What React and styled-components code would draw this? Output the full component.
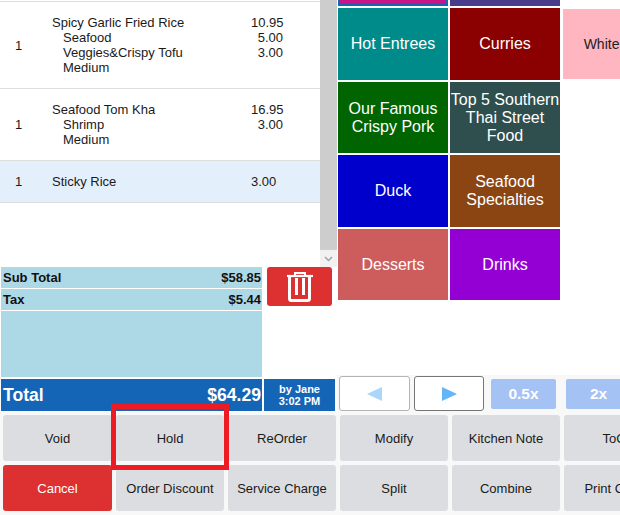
import React from 'react';
import styled, { createGlobalStyle } from 'styled-components';

const GlobalStyle = createGlobalStyle`
  html, body {
    margin: 0;
    padding: 0;
    background: #fff;
    font-family: "Liberation Sans", Arial, sans-serif;
  }
`;

// Layout
const Screen = styled.div`
  position: relative;
  width: 620px;
  height: 515px;
  overflow: hidden;
`;

const Top = styled.div`
  display: flex;
  height: 412px;
`;

const LeftColumn = styled.div`
  display: flex;
  flex-direction: column;
  width: 337px;
  flex: none;
`;

const RightColumn = styled.div`
  display: flex;
  flex-direction: column;
  width: 283px;
  flex: none;
`;

// Order list
const ScrollArea = styled.div`
  display: flex;
  height: 267px;
  flex: none;
`;

const OrderList = styled.div`
  width: 320px;
  flex: none;
  padding-top: 1px;
  box-sizing: border-box;
`;

const TopRule = styled.div`
  height: 1px;
  background: #ddd;
`;

const OrderRow = styled.div`
  display: grid;
  grid-template-columns: 52px 199px 32px;
  align-items: center;
  padding: 13px 0;
  border-bottom: 1px solid #ddd;
  background: ${(p) => (p.$selected ? '#e3f0fb' : '#fff')};
  font-size: 13px;
  line-height: 15px;
  color: #1a1a1a;
`;

const Qty = styled.div`
  padding-left: 15px;
`;

const ItemLine = styled.div`
  padding-left: ${(p) => (p.$modifier ? '11px' : '0')};
  white-space: nowrap;
`;

const PriceColumn = styled.div`
  text-align: ${(p) => (p.$left ? 'left' : 'right')};
  align-self: start;
`;

const Scrollbar = styled.div`
  display: flex;
  flex-direction: column;
  width: 17px;
  flex: none;
`;

const ScrollThumb = styled.div`
  height: 250px;
  background: #cdcdcd;
`;

const ScrollArrow = styled.div`
  display: flex;
  align-items: center;
  justify-content: center;
  height: 17px;
  background: #f1f1f1;
`;

// Totals
const SummaryRow = styled.div`
  display: flex;
  height: 110px;
  flex: none;
  padding-left: 1px;
`;

const Summary = styled.div`
  display: flex;
  flex-direction: column;
  gap: 1px;
  width: 261px;
  flex: none;
`;

const SummaryLine = styled.div`
  display: flex;
  justify-content: space-between;
  align-items: center;
  height: 21px;
  padding: 0 1px 0 2px;
  background: #add8e6;
  font-size: 13px;
  font-weight: bold;
  color: #111;
`;

const SummaryFill = styled.div`
  flex: 1;
  background: #add8e6;
`;

const TrashButton = styled.button`
  display: flex;
  align-items: flex-start;
  justify-content: flex-start;
  width: 65px;
  height: 39px;
  margin-left: 5px;
  padding: 4px 0 0 20px;
  border: 0;
  border-radius: 3px;
  background: #dd3030;
  box-sizing: border-box;
`;

const TotalRow = styled.div`
  display: flex;
  gap: 2px;
  height: 32px;
  margin-top: 2px;
  padding-left: 1px;
  color: #fff;
`;

const TotalBar = styled.div`
  display: flex;
  justify-content: space-between;
  align-items: center;
  width: 261px;
  padding: 0 1px 0 2px;
  box-sizing: border-box;
  background: #1565b7;
  font-size: 17.6px;
  font-weight: bold;
`;

const ByLine = styled.div`
  display: flex;
  flex-direction: column;
  align-items: center;
  justify-content: center;
  width: 71px;
  background: #1565b7;
  font-size: 11px;
  font-weight: bold;
  line-height: 12px;
`;

// Category tiles
const TileGrid = styled.div`
  display: grid;
  grid-template-columns: repeat(3, 110px);
  grid-template-rows: 6px 72px 71px 72px 71px;
  gap: 2px;
  height: 375px;
  margin-left: 1px;
  flex: none;
`;

const Tile = styled.div`
  display: flex;
  align-items: center;
  justify-content: center;
  background: ${(p) => p.$color};
  color: #fff;
  font-size: 16px;
  line-height: 18px;
  text-align: center;
`;

const CutTile = styled.div`
  background: ${(p) => p.$color};
  padding: ${(p) => (p.$inner ? '0 2px 3px' : '0')};
  box-sizing: border-box;
`;

const CutTileInner = styled.div`
  height: 100%;
  background: ${(p) => p.$color};
`;

const SideTile = styled.div`
  display: flex;
  align-items: center;
  justify-content: center;
  margin: 1px 0 1px 1px;
  background: #ffb6c1;
  color: #222;
  font-size: 14px;
  white-space: nowrap;
`;

// Pager
const NavBar = styled.div`
  display: flex;
  align-items: center;
  height: 37px;
  flex: none;
  padding-left: 2px;
  background: #f8f8f8;
`;

const ArrowButton = styled.button`
  display: flex;
  align-items: center;
  justify-content: center;
  width: ${(p) => p.$width}px;
  height: 35px;
  flex: none;
  margin-right: 4px;
  padding: 0;
  border: 1px solid ${(p) => (p.$dim ? '#b4b4b4' : '#767676')};
  border-radius: 3px;
  background: #fff;
  box-sizing: border-box;
`;

const SpeedButton = styled.button`
  width: 65px;
  height: 30px;
  flex: none;
  margin-left: ${(p) => p.$gap}px;
  padding: 0;
  border: 0;
  border-radius: 2px;
  background: #a4c2f4;
  color: #fff;
  font-family: inherit;
  font-size: 15.5px;
  font-weight: bold;
`;

// Action buttons
const ActionGrid = styled.div`
  display: grid;
  grid-template-columns: 109px repeat(5, 108px);
  grid-auto-rows: 46px;
  gap: 4px;
  height: 103px;
  padding: 3px 0 0 3px;
  box-sizing: border-box;
  background: #f8f8f8;
`;

const ActionButton = styled.button`
  padding: 0;
  border: 0;
  border-radius: 3px;
  background: ${(p) => (p.$danger ? '#dd3030' : '#dcdde0')};
  color: ${(p) => (p.$danger ? '#fff' : '#1a1a1a')};
  font-family: inherit;
  font-size: 13px;
  white-space: nowrap;
  overflow: hidden;
`;

// Annotation drawn over the Hold button
const Highlight = styled.div`
  position: absolute;
  left: 111px;
  top: 404px;
  width: 118px;
  height: 66px;
  border: 5px solid #ed1c24;
  box-sizing: border-box;
`;

const items = [
  {
    lines: [
      ['Spicy Garlic Fried Rice', '10.95'],
      ['Seafood', '5.00'],
      ['Veggies&Crispy Tofu', '3.00'],
      ['Medium', ''],
    ],
  },
  {
    lines: [
      ['Seafood Tom Kha', '16.95'],
      ['Shrimp', '3.00'],
      ['Medium', ''],
    ],
  },
  { lines: [['Sticky Rice', '3.00']], selected: true },
];

const tiles = [
  ['Hot Entrees', '#008b8b'],
  ['Curries', '#8b0000'],
  null,
  ['Our Famous Crispy Pork', '#006400'],
  ['Top 5 Southern Thai Street Food', '#2f4f4f'],
  null,
  ['Duck', '#0000cd'],
  ['Seafood Specialties', '#8b4513'],
  null,
  ['Desserts', '#cd5c5c'],
  ['Drinks', '#9400d3'],
];

const actions = [
  'Void', 'Hold', 'ReOrder', 'Modify', 'Kitchen Note', 'ToGo',
  'Cancel', 'Order Discount', 'Service Charge', 'Split', 'Combine', 'Print Check',
];

const TrashIcon = () => (
  <svg width="26" height="31" viewBox="0 0 26 31" fill="none" stroke="#fff">
    <path d="M0 5h26" strokeWidth="2.2" />
    <path d="M8 5V2h10v3" strokeWidth="2" />
    <path d="M2.5 5v22.5q0 2 2 2h16q2 0 2-2V5" strokeWidth="3" />
    <path d="M9.5 7v17M16.5 7v17" strokeWidth="3" />
  </svg>
);

const App = () => (
  <Screen>
    <GlobalStyle />
    <Top>
      <LeftColumn>
        <ScrollArea>
          <OrderList>
            <TopRule />
            {items.map((item, i) => (
              <OrderRow key={i} $selected={item.selected}>
                <Qty>1</Qty>
                <div>
                  {item.lines.map(([name], j) => (
                    <ItemLine key={j} $modifier={j > 0}>{name}</ItemLine>
                  ))}
                </div>
                <PriceColumn $left={item.selected}>
                  {item.lines.map(([, price], j) => (
                    <div key={j}>{price}</div>
                  ))}
                </PriceColumn>
              </OrderRow>
            ))}
          </OrderList>
          <Scrollbar>
            <ScrollThumb />
            <ScrollArrow>
              <svg width="9" height="6" viewBox="0 0 9 6" fill="none" stroke="#a3a3a3" strokeWidth="1.5">
                <path d="M1 1l3.5 3.5L8 1" />
              </svg>
            </ScrollArrow>
          </Scrollbar>
        </ScrollArea>
        <SummaryRow>
          <Summary>
            <SummaryLine><span>Sub Total</span><span>$58.85</span></SummaryLine>
            <SummaryLine><span>Tax</span><span>$5.44</span></SummaryLine>
            <SummaryFill />
          </Summary>
          <TrashButton><TrashIcon /></TrashButton>
        </SummaryRow>
        <TotalRow>
          <TotalBar><span>Total</span><span>$64.29</span></TotalBar>
          <ByLine><span>by Jane</span><span>3:02 PM</span></ByLine>
        </TotalRow>
      </LeftColumn>
      <RightColumn>
        <TileGrid>
          <CutTile $color="#1565b7" $inner><CutTileInner $color="#c71585" /></CutTile>
          <CutTile $color="#483d8b" />
          <div />
          {tiles.map((tile, i) => {
            if (!tile) return i === 2 ? <SideTile key={i}>White Rice</SideTile> : <div key={i} />;
            return <Tile key={i} $color={tile[1]}>{tile[0]}</Tile>;
          })}
        </TileGrid>
        <NavBar>
          <ArrowButton $width={71} $dim>
            <svg width="15" height="14" viewBox="0 0 15 14"><polygon points="0,7 15,0 15,14" fill="#a9d6fb" /></svg>
          </ArrowButton>
          <ArrowButton $width={70}>
            <svg width="15" height="14" viewBox="0 0 15 14"><polygon points="15,7 0,0 0,14" fill="#63b5f8" /></svg>
          </ArrowButton>
          <SpeedButton $gap={3}>0.5x</SpeedButton>
          <SpeedButton $gap={10}>2x</SpeedButton>
        </NavBar>
      </RightColumn>
    </Top>
    <ActionGrid>
      {actions.map((label) => (
        <ActionButton key={label} $danger={label === 'Cancel'}>{label}</ActionButton>
      ))}
    </ActionGrid>
    <Highlight />
  </Screen>
);

export default App;
